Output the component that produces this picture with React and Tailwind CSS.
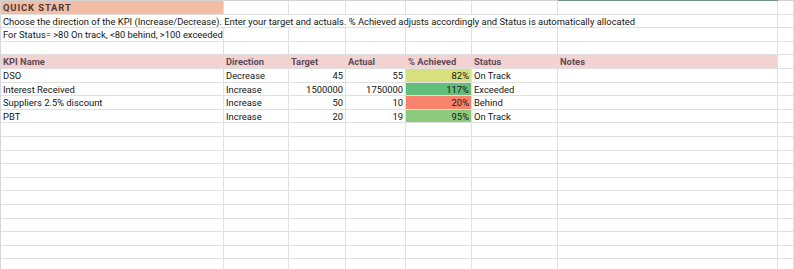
const cols = "grid grid-cols-[223px_65px_57px_60px_66px_86px_220px_1fr]"

const kpis = [
  { name: "DSO", direction: "Decrease", target: 45, actual: 55, pct: "82%", status: "On Track", color: "bg-[#d7e07f]" },
  { name: "Interest Received", direction: "Increase", target: 1500000, actual: 1750000, pct: "117%", status: "Exceeded", color: "bg-[#62be7b]" },
  { name: "Suppliers 2.5% discount", direction: "Increase", target: 50, actual: 10, pct: "20%", status: "Behind", color: "bg-[#f8836c]" },
  { name: "PBT", direction: "Increase", target: 20, actual: 19, pct: "95%", status: "On Track", color: "bg-[#8dca7e]" },
]

// plain grid cell
function Cell({ children, className = "" }) {
  return (
    <div
      className={
        "h-[13.6px] leading-[13px] px-[2px] border-r border-b border-[#e0e0e0] whitespace-nowrap overflow-visible " +
        className
      }
    >
      {children}
    </div>
  )
}

function EmptyRow() {
  return (
    <div className={cols}>
      <Cell />
      <Cell />
      <Cell />
      <Cell />
      <Cell />
      <Cell />
      <Cell />
      <Cell />
    </div>
  )
}

export default function App() {
  return (
    <div className="w-[794px] h-[269px] overflow-hidden bg-white text-[9.4px] text-[#141414] font-['Roboto',sans-serif] border-l border-[#d6d6d6]">

      {/* top edge */}
      <div className={cols}>
        <div className="col-span-6 h-px bg-[#d2d2d2]" />
        <div className="h-px bg-[#6f9484]" />
        <div className="h-px bg-[#d2d2d2]" />
      </div>

      {/* Quick start */}
      <div className={cols}>
        <Cell className="bg-[#f3bca5] font-bold text-[#4a3a3a] tracking-[0.9px]">QUICK START</Cell>
        <Cell />
        <Cell />
        <Cell />
        <Cell />
        <Cell />
        <Cell />
        <Cell />
      </div>

      {/* Instructions */}
      <div className={cols}>
        <Cell className="col-span-7">
          Choose the direction of the KPI (Increase/Decrease). Enter your target and actuals. % Achieved adjusts accordingly and Status is automatically allocated
        </Cell>
        <Cell />
      </div>

      <div className={cols}>
        <Cell>For Status= &gt;80 On track, &lt;80 behind, &gt;100 exceeded</Cell>
        <Cell />
        <Cell />
        <Cell />
        <Cell />
        <Cell />
        <Cell />
        <Cell />
      </div>

      <EmptyRow />

      {/* Table header */}
      <div className={cols}>
        <div className="col-span-7 grid grid-cols-subgrid bg-[#f3d2d2] border-r border-b border-[#e0e0e0] font-bold text-[#5e4c57] h-[13.6px] leading-[13px]">
          <div className="px-[2px]">KPI Name</div>
          <div className="px-[2px]">Direction</div>
          <div className="px-[2px]">Target</div>
          <div className="px-[2px]">Actual</div>
          <div className="px-[2px]">% Achieved</div>
          <div className="px-[2px]">Status</div>
          <div className="px-[2px]">Notes</div>
        </div>
        <Cell />
      </div>

      {/* Rows */}
      {kpis.map((k) => (
        <div key={k.name} className={cols}>
          <Cell>{k.name}</Cell>
          <Cell>{k.direction}</Cell>
          <Cell className="text-right">{k.target}</Cell>
          <Cell className="text-right">{k.actual}</Cell>
          <Cell className={"text-right " + k.color}>{k.pct}</Cell>
          <Cell>{k.status}</Cell>
          <Cell />
          <Cell />
        </div>
      ))}

      {Array.from({ length: 11 }).map((_, i) => (
        <EmptyRow key={i} />
      ))}

    </div>
  )
}
